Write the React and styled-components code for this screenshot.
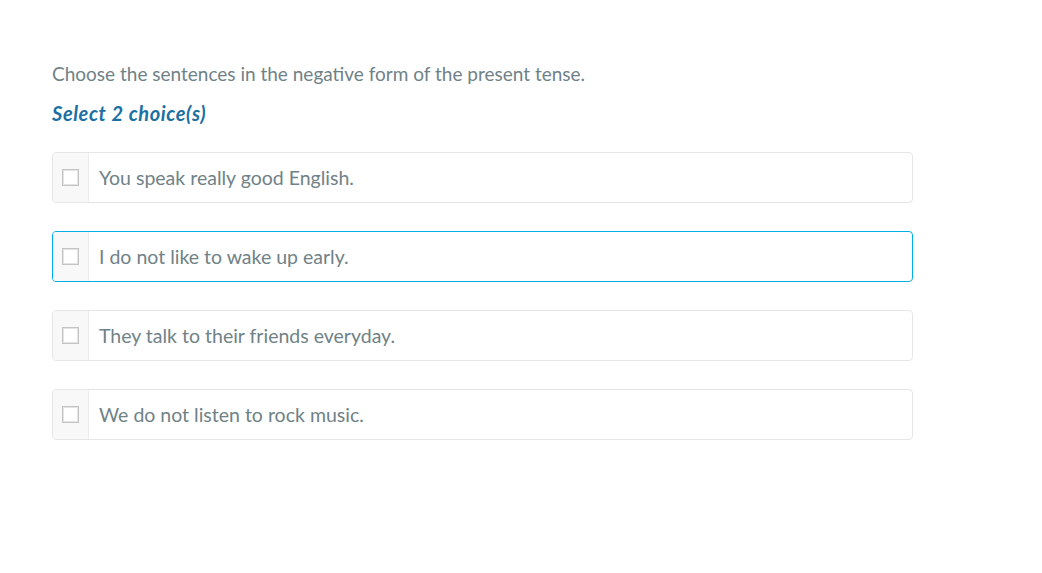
import React from "react";
import styled, { createGlobalStyle } from "styled-components";

const GlobalStyle = createGlobalStyle`
  body {
    margin: 0;
    background: #ffffff;
    font-family: "Lato", "Noto Sans", sans-serif;
  }
`;

const Page = styled.div`
  padding: 62px 0 0 52px;
  width: 861px;
`;

const Question = styled.p`
  margin: 0;
  font-size: 19px;
  line-height: 24px;
  color: #6f8287;
`;

const Hint = styled.p`
  margin: 15px 0 0;
  font-size: 20px;
  line-height: 24px;
  font-weight: 700;
  font-style: italic;
  letter-spacing: 0.6px;
  color: #1b6fa3;
`;

const Choices = styled.ul`
  list-style: none;
  margin: 27px 0 0;
  padding: 0;
  display: flex;
  flex-direction: column;
  gap: 28px;
`;

const Choice = styled.li`
  display: flex;
  align-items: stretch;
  height: 51px;
  box-sizing: border-box;
  border: 1px solid ${(p) => (p.$focused ? "#00aee8" : "#e6e6e6")};
  border-radius: 4px;
  overflow: hidden;
  cursor: pointer;
`;

const BoxCell = styled.div`
  width: 35px;
  flex: none;
  display: flex;
  align-items: center;
  justify-content: center;
  background: #f8f8f8;
  border-right: 1px solid #ececec;
`;

const Box = styled.span`
  width: 17px;
  height: 17px;
  box-sizing: border-box;
  border: 1px solid #c4c4c4;
  box-shadow: inset 0 0 0 1px #e4e4e4;
  background: #ffffff;
`;

const Label = styled.span`
  display: flex;
  align-items: center;
  padding-left: 10px;
  font-size: 19.5px;
  color: #6f8287;
`;

const choices = [
  "You speak really good English.",
  "I do not like to wake up early.",
  "They talk to their friends everyday.",
  "We do not listen to rock music.",
];

export default function App() {
  return (
    <>
      <GlobalStyle />
      <Page>
        <Question>Choose the sentences in the negative form of the present tense.</Question>
        <Hint>Select 2 choice(s)</Hint>
        <Choices>
          {choices.map((text, i) => (
            <Choice key={text} $focused={i === 1}>
              <BoxCell>
                <Box />
              </BoxCell>
              <Label>{text}</Label>
            </Choice>
          ))}
        </Choices>
      </Page>
    </>
  );
}
